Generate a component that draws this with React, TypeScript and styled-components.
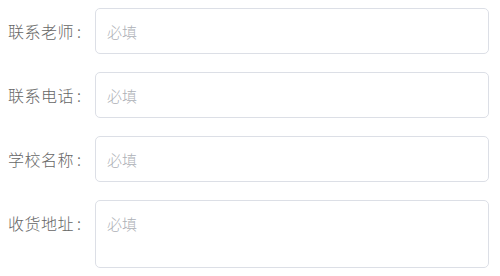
import * as React from 'react';
import styled, { createGlobalStyle } from 'styled-components';

const GlobalStyle = createGlobalStyle`
	body {
		margin: 0;
		background: #ffffff;
		font-family: "Noto Sans CJK SC", "Noto Sans", sans-serif;
	}
`;

const StyledForm = styled.form`
	display: flex;
	flex-direction: column;
	gap: 18px;
	padding: 8px 11px 0 8px;
`;

const StyledRow = styled.div`
	display: flex;
	flex-direction: row;
	align-items: flex-start;
`;

const StyledLabel = styled.label`
	flex: 0 0 87px;
	line-height: 46px;
	font-size: 16px;
	font-weight: 300;
	letter-spacing: 0.5px;
	color: #666666;
	white-space: nowrap;
`;

const StyledColon = styled.span`
	margin-left: 3px;
`;

const fieldStyle = `
	box-sizing: border-box;
	flex: 1;
	min-width: 0;
	border: 1px solid #dcdfe6;
	border-radius: 5px;
	background: #ffffff;
	padding: 0 11px;
	font-family: "Noto Sans CJK SC", "Noto Sans", sans-serif;
	font-size: 15px;
	font-weight: 300;
	color: #606266;
	outline: none;

	&::placeholder {
		color: #adb0b6;
	}
`;

const StyledInput = styled.input`
	${fieldStyle}
	height: 46px;
`;

const StyledTextarea = styled.textarea<{ $rows: number }>`
	${fieldStyle}
	height: ${props => props.$rows * 34}px;
	padding-top: 11px;
	line-height: 24px;
	resize: none;
`;

interface Field {
	id: string;
	name: string;
	multiline?: boolean;
}

const fields: Field[] = [
	{ id: 'teacher', name: '联系老师' },
	{ id: 'phone', name: '联系电话' },
	{ id: 'school', name: '学校名称' },
	{ id: 'address', name: '收货地址', multiline: true }
];

const App: React.FC = () => (
	<>
		<GlobalStyle />
		<StyledForm>
			{fields.map(field => (
				<StyledRow key={field.id}>
					<StyledLabel htmlFor={field.id}>
						{field.name}
						<StyledColon>:</StyledColon>
					</StyledLabel>
					{field.multiline ? (
						<StyledTextarea id={field.id} $rows={2} placeholder="必填" />
					) : (
						<StyledInput id={field.id} placeholder="必填" />
					)}
				</StyledRow>
			))}
		</StyledForm>
	</>
);

export default App;
